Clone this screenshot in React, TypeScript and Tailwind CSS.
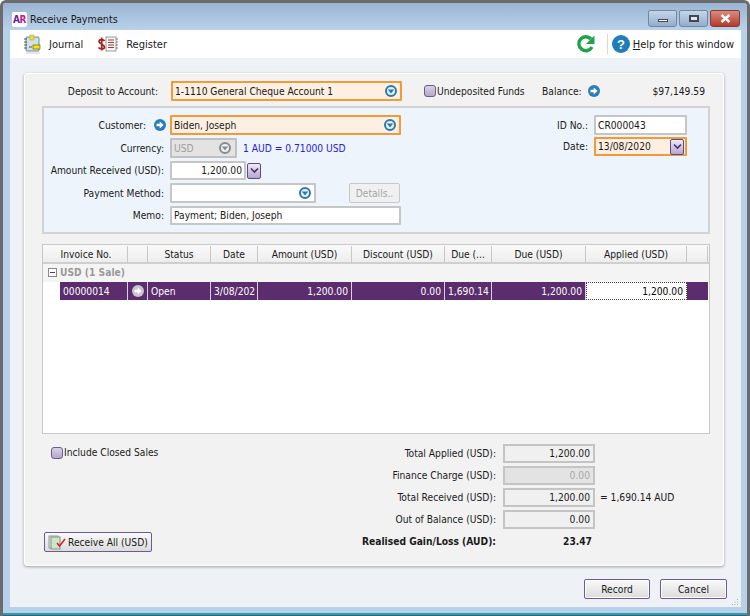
import type { ReactNode } from "react"

function ComboIcon({ grey }: { grey?: boolean }) {
  const c = grey ? "#8a8a8a" : "#2a78b0"
  return (
    <svg width="12" height="12" viewBox="0 0 12 12" className="shrink-0">
      <circle cx="6" cy="6" r="5" fill="#e8f2fa" stroke={c} strokeWidth="2" />
      <path d="M2.800 4.500h6.400L6 8.400z" fill={c} />
    </svg>
  )
}

function ArrowIcon() {
  return (
    <svg width="12" height="12" viewBox="0 0 12 12" className="shrink-0">
      <circle cx="6" cy="6" r="6" fill="#2b7cb8" />
      <path d="M2.500 4.700h3.200V2.600L9.600 6 5.700 9.400V7.300H2.500z" fill="#fff" />
    </svg>
  )
}

function CalButton() {
  return (
    <span className="flex h-[16px] w-[14px] shrink-0 items-center justify-center rounded-[2px] border border-[#5f4a80] bg-gradient-to-b from-[#efeaf6] to-[#b5a6cf]">
      <svg width="9" height="7" viewBox="0 0 9 7">
        <path d="M1 1.500l3.500 3.500L8 1.500" fill="none" stroke="#4a2f73" strokeWidth="1.6" />
      </svg>
    </span>
  )
}

function Check({ label }: { label: string }) {
  return (
    <div className="flex items-center">
      <span className="h-[12px] w-[12px] rounded-[3px] border border-[#6d5a8e] bg-gradient-to-b from-[#d9d2e6] to-[#b3a7ca]" />
      <span className="ml-px whitespace-nowrap">{label}</span>
    </div>
  )
}

function Field({ className, children }: { className: string; children?: ReactNode }) {
  return <div className={`flex items-center whitespace-nowrap rounded-[1px] border-2 ${className}`}>{children}</div>
}

function Row({ label, children }: { label: string; children: ReactNode }) {
  return (
    <div className="mt-[3px] flex items-center">
      <span className="flex w-[110px] shrink-0 justify-end whitespace-nowrap">{label}</span>
      {children}
    </div>
  )
}

const columns = [
  { title: "Invoice No.", w: "w-[83px]" },
  { title: "", w: "w-[20px]" },
  { title: "Status", w: "w-[63px]" },
  { title: "Date", w: "w-[47px]" },
  { title: "Amount (USD)", w: "w-[94px]" },
  { title: "Discount (USD)", w: "w-[93px]" },
  { title: "Due (...", w: "w-[47px]" },
  { title: "Due (USD)", w: "w-[94px]" },
  { title: "Applied (USD)", w: "w-[101px]" },
  { title: "", w: "w-[21px]" },
]

function SaleRow() {
  const cell = "flex h-full items-center border-r border-[#d9cfe0] bg-[#5b2d6e] px-[3px]"
  return (
    <div className="flex h-[18px] items-center pl-[17px] text-white">
      <div className={`${cell} w-[68px]`}>00000014</div>
      <div className={`${cell} w-[20px] justify-center`}>
        <svg width="12" height="12" viewBox="0 0 12 12">
          <circle cx="6" cy="6" r="6" fill="#c9c5cc" />
          <path d="M2.500 4.700h3.200V2.600L9.600 6 5.700 9.400V7.300H2.500z" fill="#fff" />
        </svg>
      </div>
      <div className={`${cell} w-[63px]`}>Open</div>
      <div className={`${cell} w-[47px] overflow-hidden whitespace-nowrap`}>3/08/202</div>
      <div className={`${cell} w-[94px] justify-end`}>1,200.00</div>
      <div className={`${cell} w-[93px] justify-end`}>0.00</div>
      <div className={`${cell} w-[47px]`}>1,690.14</div>
      <div className={`${cell} w-[94px] justify-end`}>1,200.00</div>
      <div className="flex h-full w-[101px] items-center justify-end border border-dotted border-[#444] bg-white px-[3px] text-black">1,200.00</div>
      <div className="h-full w-[21px] bg-[#5b2d6e]" />
    </div>
  )
}

function Total({ label, value, note, disabled }: { label: string; value: string; note?: string; disabled?: boolean }) {
  return (
    <div className="flex h-[19px] items-center">
      <span className="w-[147px] shrink-0 whitespace-nowrap text-right">{label}</span>
      <div
        className={`ml-[7px] flex h-[19px] w-[92px] items-center justify-end border-2 border-[#c4c4c4] pr-[3px] ${
          disabled ? "bg-[#e3e3e3] text-[#a8a8a8]" : "bg-[#f0f0f0]"
        }`}
      >
        {value}
      </div>
      {note && <span className="ml-[5px] whitespace-nowrap">{note}</span>}
    </div>
  )
}

function FootButton({ label, w }: { label: string; w: string }) {
  return (
    <button className={`${w} h-[20px] rounded-[2px] border border-[#6d5a8e] bg-gradient-to-b from-[#fafafa] to-[#dcdcdc] text-[#1a1a1a] shadow-[inset_0_0_0_1px_#fff]`}>
      {label}
    </button>
  )
}

export default function App() {
  return (
    <div className="flex h-[616px] w-[750px] flex-col overflow-hidden rounded-t-[6px] border-[3px] border-b-0 border-[#6b6b6b] bg-[#b7d1ea] text-[10.2px] leading-[13px] text-[#1a1a1a] [font-family:'DejaVu_Sans_Condensed','DejaVu_Sans',sans-serif]">
      {/* title bar */}
      <div className="flex h-[27px] shrink-0 items-center bg-gradient-to-b from-[#9ab5d3] to-[#b9d2ea] pl-[9px] pr-[7px] pt-[5px]">
        <span className="flex h-[15px] w-[15px] items-center justify-center rounded-[2px] bg-white text-[10px] font-bold tracking-[-0.5px]">
          <span className="text-[#6a1b9a]">A</span>
          <span className="text-[#d0108f]">R</span>
        </span>
        <span className="ml-[3px] text-[10.7px]">Receive Payments</span>
        <div className="ml-auto mt-[2px] flex items-start self-start">
          <span className="flex h-[17px] w-[29px] items-center justify-center rounded-b-[3px] rounded-t-[2px] border border-[#6f87a5] bg-gradient-to-b from-[#c6d6e9] to-[#93adcb]">
            <span className="mt-[4px] h-[3px] w-[10px] border border-[#445] bg-white" />
          </span>
          <span className="ml-[2px] flex h-[17px] w-[29px] items-center justify-center rounded-b-[3px] rounded-t-[2px] border border-[#6f87a5] bg-gradient-to-b from-[#c6d6e9] to-[#93adcb]">
            <span className="h-[7px] w-[10px] border-2 border-[#445] bg-[#dfe8f2]" />
          </span>
          <span className="ml-[2px] flex h-[17px] w-[30px] items-center justify-center rounded-b-[3px] rounded-t-[2px] border border-[#8a3a30] bg-gradient-to-b from-[#d98b80] to-[#b5382a]">
            <svg width="11" height="9" viewBox="0 0 11 9">
              <path d="M1.500 1l8 7M9.500 1l-8 7" stroke="#fff" strokeWidth="2.400" />
            </svg>
          </span>
        </div>
      </div>

      <div className="flex flex-1 flex-col pb-[6px] pl-[7px] pr-[6px]">
        {/* toolbar */}
        <div className="flex h-[28px] shrink-0 items-center bg-white pl-[12px] pr-[7px] text-[11px]">
          <svg width="20" height="20" viewBox="0 0 20 20">
            <rect x="4" y="3" width="13" height="14" rx="1" fill="#cfe3e4" stroke="#73868f" />
            <path d="M2 5h3M2 8h3M2 11h3M2 14h3" stroke="#4a5a63" />
            <rect x="8" y="1" width="4" height="5" fill="#ecd84a" stroke="#b9a52c" strokeWidth=".5" />
            <rect x="11" y="11" width="7" height="4" fill="#f5e600" stroke="#55521a" strokeWidth=".6" />
            <path d="M7 13h3" stroke="#555" />
            <path d="M4 19h14" stroke="#cfcfcf" />
          </svg>
          <span className="ml-[7px]"><span className="underline">J</span>ournal</span>
          <svg width="22" height="20" viewBox="0 0 22 20" className="ml-[14px]">
            <rect x="9" y="3" width="10" height="14" fill="#f5f5f5" stroke="#9a9a9a" />
            <path d="M11 6h6M11 8.500h6M11 11h6M11 13.500h6" stroke="#a83a3a" />
            <path d="M19 5h2M19 8h2M19 11h2M19 14h2" stroke="#777" />
            <path d="M7.500 7C6.500 5 2 5 2 7.500S7.500 10.500 7.500 13 3 15.500 1.500 13.500M4.700 3.500v13" fill="none" stroke="#a32020" strokeWidth="1.700" />
          </svg>
          <span className="ml-[7px]">Re<span className="underline">g</span>ister</span>
          <svg width="22" height="22" viewBox="0 0 22 22" className="ml-auto">
            <path d="M17 14a7 7 0 1 1-1-8" fill="none" stroke="#1fa24a" strokeWidth="3.400" />
            <path d="M19.500 2.500v8.500h-8.500z" fill="#1fa24a" />
          </svg>
          <span className="ml-[10px] h-[20px] w-px bg-[#d8d8d8]" />
          <svg width="18" height="18" viewBox="0 0 18 18" className="ml-[4px]">
            <circle cx="9" cy="9" r="9" fill="#1f7dbd" />
            <text x="9" y="13.500" textAnchor="middle" fontSize="13" fontWeight="700" fill="#fff" fontFamily="Liberation Sans">?</text>
          </svg>
          <span className="ml-[3px]"><span className="underline">H</span>elp for this window</span>
        </div>

        <div className="relative flex flex-1 flex-col bg-[#eef2f7] pl-[14px] pr-[17px] pt-[15px]">
          {/* main panel */}
          <div className="flex h-[493px] shrink-0 flex-col rounded-[3px] border border-white bg-[#f2f2f2] pl-[17px] pr-[13px] shadow-[0_1px_3px_rgba(0,0,0,0.35)]">
            <div className="mt-[7px] flex h-[20px] items-center">
              <span className="w-[116px] shrink-0 whitespace-nowrap text-right">Deposit to Account:</span>
              <Field className="ml-[13px] h-[20px] w-[231px] justify-between border-[#f09a3a] bg-[#fdf0e2] pl-[2px] pr-[3px]">
                1-1110 General Cheque Account 1
                <ComboIcon />
              </Field>
              <div className="ml-[22px] w-[118px]"><Check label="Undeposited Funds" /></div>
              <span>Balance:</span>
              <span className="ml-[6px]"><ArrowIcon /></span>
              <span className="ml-auto pr-[5px]">$97,149.59</span>
            </div>

            {/* customer panel */}
            <div className="mt-[5px] flex h-[128px] shrink-0 justify-between border-2 border-[#d2d2d2] bg-[#edf4fb] pl-[10px] pr-[21px] pt-[7px]">
              <div className="flex flex-col">
                <div className="flex h-[20px] items-center">
                  <span className="w-[92px] text-right">Customer:</span>
                  <span className="ml-[8px]"><ArrowIcon /></span>
                  <Field className="ml-[4px] h-[20px] w-[231px] justify-between border-[#f09a3a] bg-[#fdf0e2] pl-[2px] pr-[3px]">
                    Biden, Joseph
                    <ComboIcon />
                  </Field>
                </div>
                <Row label="Currency:">
                  <Field className="ml-[6px] h-[20px] w-[67px] justify-between border-[#c0c0c0] bg-[#e3e3e3] pl-[2px] pr-[4px] text-[#a0a0a0]">
                    USD
                    <ComboIcon grey />
                  </Field>
                  <span className="ml-[6px] whitespace-nowrap text-[#2a1cd8]">1 AUD = 0.71000 USD</span>
                </Row>
                <Row label="Amount Received (USD):">
                  <Field className="ml-[6px] h-[19px] w-[76px] justify-end border-[#c6c6c6] bg-white pr-[2px]">1,200.00</Field>
                  <span className="ml-px"><CalButton /></span>
                </Row>
                <Row label="Payment Method:">
                  <Field className="ml-[6px] h-[20px] w-[146px] justify-end border-[#c6c6c6] bg-white pr-[3px]">
                    <ComboIcon />
                  </Field>
                  <button className="ml-[33px] h-[20px] w-[51px] rounded-[2px] border border-[#c8c8c8] bg-[#f0f0f0] text-[#a5a5a5]">Details..</button>
                </Row>
                <Row label="Memo:">
                  <Field className="ml-[6px] h-[19px] w-[231px] border-[#c6c6c6] bg-white pl-[2px]">Payment; Biden, Joseph</Field>
                </Row>
              </div>
              <div className="flex flex-col">
                <div className="flex h-[20px] items-center justify-end">
                  <span>ID No.:</span>
                  <Field className="ml-[6px] h-[20px] w-[93px] border-[#c6c6c6] bg-white pl-[2px]">CR000043</Field>
                </div>
                <div className="mt-[2px] flex h-[19px] items-center justify-end">
                  <span>Date:</span>
                  <Field className="ml-[6px] h-[19px] w-[93px] justify-between border-[#f09a3a] bg-[#fdf0e2] pl-[2px] pr-px">
                    13/08/2020
                    <CalButton />
                  </Field>
                </div>
              </div>
            </div>

            {/* grid */}
            <div className="mt-[10px] h-[190px] w-[668px] shrink-0 overflow-hidden border border-[#c8c8c8] bg-white">
              <div className="flex h-[19px] border-b-2 border-[#cfcfcf] bg-gradient-to-b from-[#fafafa] to-[#ededed] pl-[2px] pt-px">
                {columns.map((col, i) => (
                  <div key={i} className={`${col.w} flex items-center justify-center whitespace-nowrap border-r border-[#c8c8c8]`}>
                    {col.title}
                  </div>
                ))}
              </div>
              <div className="flex h-[18px] items-center bg-[#f4f4f4] pb-px pl-[5px] font-bold text-[#9a9a9a]">
                <span className="mr-[3px] flex h-[9px] w-[9px] items-center justify-center border border-[#888] bg-white">
                  <span className="h-px w-[5px] bg-[#444]" />
                </span>
                USD (1 Sale)
              </div>
              <SaleRow />
            </div>

            {/* totals */}
            <div className="flex flex-1">
              <div className="flex w-[307px] flex-col pb-[13px] pl-[9px] pt-[12px]">
                <Check label="Include Closed Sales" />
                <button className="-ml-[7px] mt-auto flex h-[20px] w-[108px] items-center rounded-[2px] border border-[#6d5a8e] bg-gradient-to-b from-[#fafafa] to-[#dcdcdc] pl-[3px]">
                  <svg width="18" height="15" viewBox="0 0 18 15">
                    <rect x="1" y="1" width="9" height="12" fill="#e4e4e4" stroke="#999" />
                    <rect x="3" y="2" width="9" height="12" fill="#cfe5c8" stroke="#7c9b7a" />
                    <path d="M9 8l2.500 3L17 4" fill="none" stroke="#d0202a" strokeWidth="1.500" />
                  </svg>
                  <span className="ml-[2px] whitespace-nowrap">Receive All (USD)</span>
                </button>
              </div>
              <div className="flex flex-col gap-[3px] pt-[10px]">
                <Total label="Total Applied (USD):" value="1,200.00" />
                <Total label="Finance Charge (USD):" value="0.00" disabled />
                <Total label="Total Received (USD):" value="1,200.00" note="= 1,690.14 AUD" />
                <Total label="Out of Balance (USD):" value="0.00" />
                <div className="mt-[3px] flex items-center font-bold">
                  <span className="w-[147px] whitespace-nowrap text-right">Realised Gain/Loss (AUD):</span>
                  <span className="ml-[7px] w-[92px] pr-[3px] text-right">23.47</span>
                </div>
              </div>
            </div>
          </div>

          {/* footer buttons */}
          <div className="-mr-[3px] mt-[13px] flex justify-end gap-[10px]">
            <FootButton label="Record" w="w-[66px]" />
            <FootButton label="Cancel" w="w-[67px]" />
          </div>

          <svg width="8" height="8" viewBox="0 0 8 8" className="absolute bottom-[1px] right-[2px]">
            <path d="M6 1h1v1H6zM3.500 3.500h1v1h-1zM6 3.500h1v1H6zM1 6h1v1H1zM3.500 6h1v1h-1zM6 6h1v1H6z" fill="#a8a8a8" />
          </svg>
        </div>
      </div>
      <div className="h-[2px] shrink-0 bg-[#1f9fc0]" />
      <div className="h-px shrink-0 bg-[#555]" />
    </div>
  )
}
